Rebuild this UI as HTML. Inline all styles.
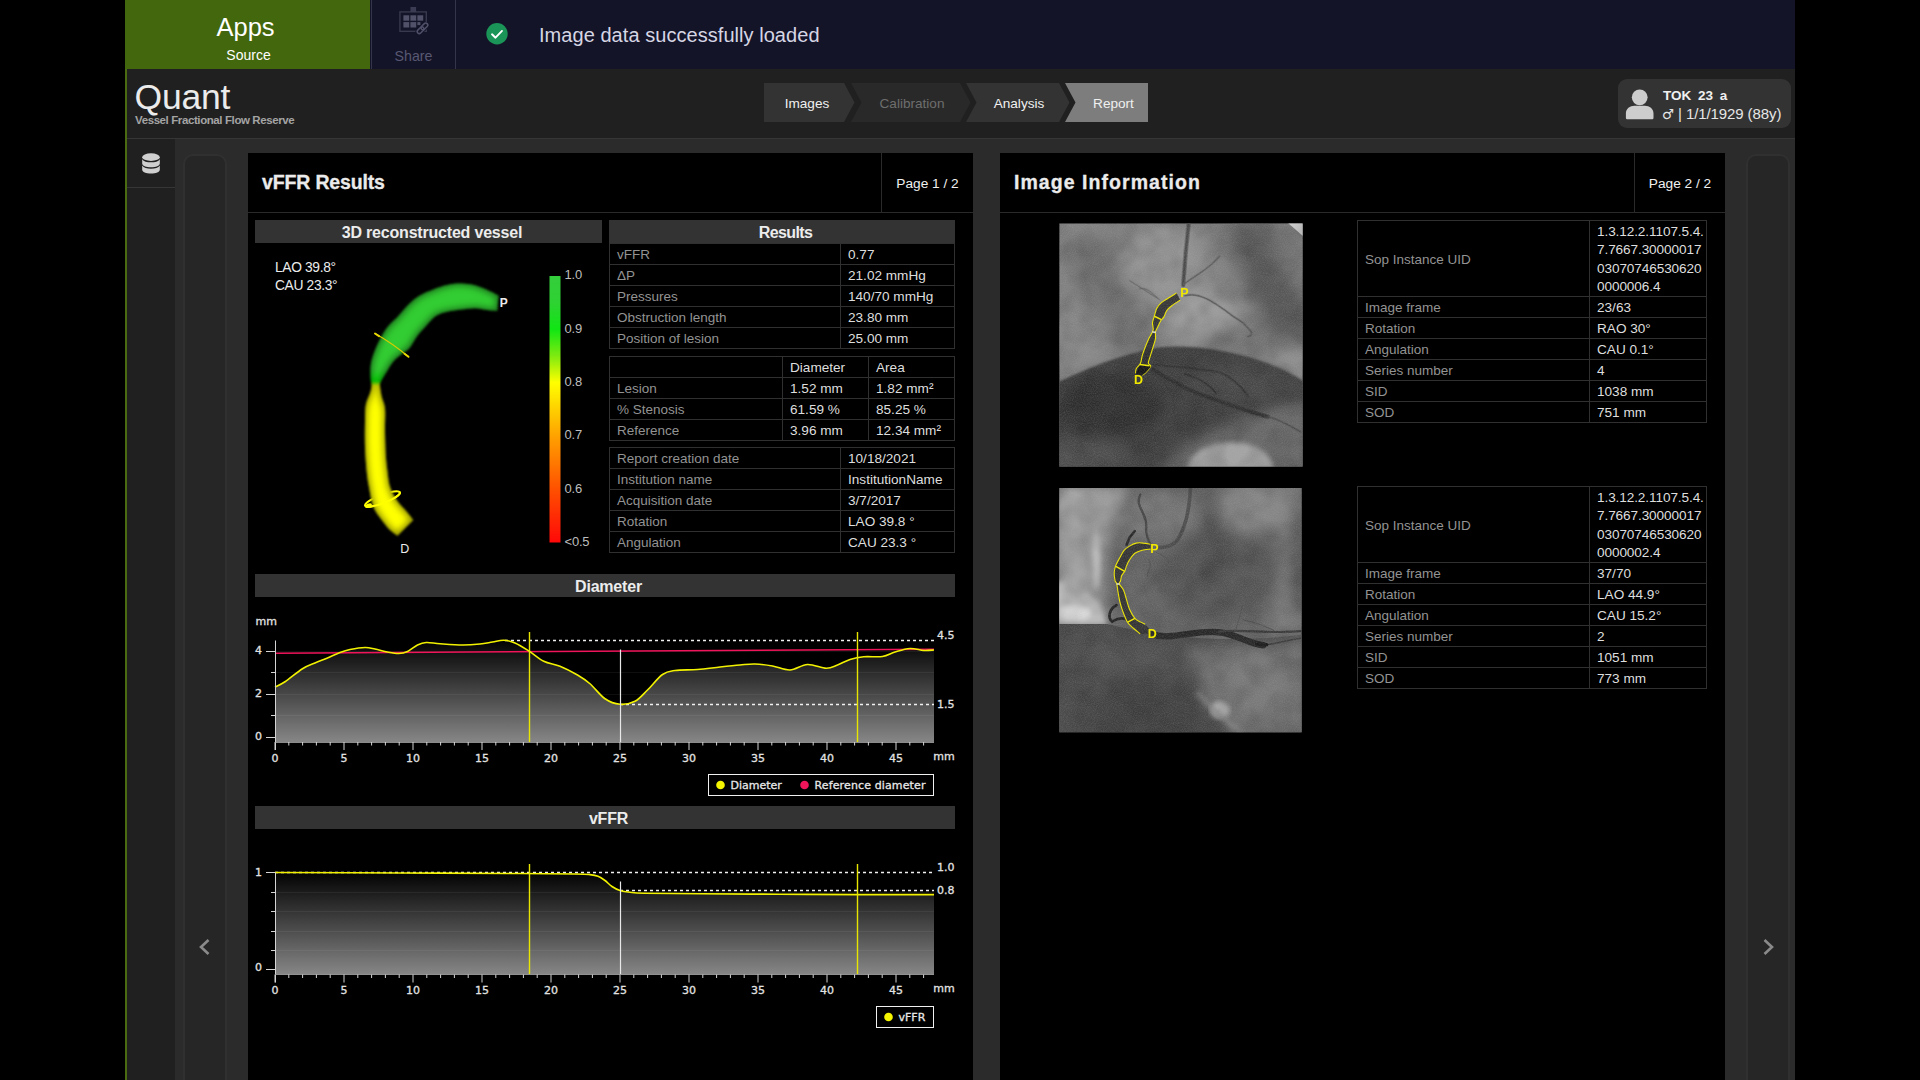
<!DOCTYPE html>
<html lang="en">
<head>
<meta charset="utf-8">
<title>Quant - Vessel Fractional Flow Reserve</title>
<style>
*{box-sizing:border-box;margin:0;padding:0}
html,body{width:1920px;height:1080px;overflow:hidden;background:#000}
body{font-family:"Liberation Sans",sans-serif;color:#f0f0f0;position:relative}
.abs{position:absolute}
#app{position:absolute;left:125px;top:0;width:1670px;height:1080px;background:#2b2b2b;overflow:hidden}
#greenline{position:absolute;left:0;top:69px;width:2px;height:1011px;background:#4a6b10}
#topbar{position:absolute;left:0;top:0;width:1670px;height:69px;background:#141428}
#apps{position:absolute;left:0;top:0;width:245px;height:69px;background:#43670c;text-align:center;color:#fff}
#apps .t1{position:absolute;left:0;width:241px;top:12px;font-size:25.5px;line-height:30px}
#apps .t2{position:absolute;left:0;width:247px;top:46px;font-size:14px;line-height:18px}
#share{position:absolute;left:246px;top:0;width:85px;height:69px;border-left:1px solid #34344a;border-right:1px solid #34344a;color:#5d5d74;text-align:center}
#share .lbl{position:absolute;left:0;width:83px;top:47px;font-size:14.2px;line-height:18px;color:#585872}
#status{position:absolute;left:414px;top:21.5px;font-size:20px;line-height:26px;color:#d6d6e4;white-space:nowrap;letter-spacing:0.05px}
#header{position:absolute;left:2px;top:69px;width:1668px;height:70px;background:#202020;border-bottom:1px solid #363636}
#quant{position:absolute;left:7.5px;top:8px;font-size:35.5px;line-height:40px;color:#ebebeb;letter-spacing:-0.2px}
#subq{position:absolute;left:8px;top:44px;font-size:11.5px;line-height:14px;color:#a4a4a4;font-weight:bold;white-space:nowrap;letter-spacing:-0.4px}
.crumb{position:absolute;top:14.5px;height:39px;font-size:13.6px;line-height:39px;text-align:center;color:#f0f0f0}
#patient{position:absolute;left:1491px;top:10px;width:173px;height:49px;border-radius:9px;background:#333}
#patient .n{position:absolute;left:45px;top:8.5px;font-size:13.5px;line-height:16px;font-weight:bold;color:#f0f0f0;white-space:nowrap;word-spacing:3px}
#patient .d{position:absolute;left:44px;top:25.5px;font-size:15px;line-height:18px;color:#e6e6e6;white-space:nowrap;letter-spacing:-0.1px}
#patient .ms{font-family:"DejaVu Sans","Liberation Sans",sans-serif;font-size:13.5px;line-height:10px;display:inline-block;vertical-align:0px;margin-right:0px}
#sidebar{position:absolute;left:2px;top:139px;width:48px;height:941px;background:#202020}
#sidebar .cell{position:absolute;left:0;top:0;width:48px;height:49px;border-bottom:1px solid #363636}
.navbtn{position:absolute;top:153.5px;width:44px;height:940px;background:#262626;border:2px solid #303030;border-radius:10px}
.panel{position:absolute;top:153px;height:927px;background:#000}
.ptitle{position:absolute;left:0;top:0;height:60px;border-bottom:1px solid #2a2a2a}
.ptitle h2{position:absolute;left:14px;top:15px;font-size:19.5px;line-height:28px;font-weight:bold;color:#ebebeb;white-space:nowrap;letter-spacing:-0.3px;-webkit-text-stroke:0.3px #ebebeb}
.ppage{position:absolute;top:0;height:59px;border-left:1px solid #2a2a2a;font-size:13.7px;line-height:61px;text-align:center;color:#f0f0f0}
.sechead{position:absolute;padding-left:7px;height:23px;background:#333;color:#ececec;font-size:16px;line-height:25px;font-weight:bold;text-align:center;letter-spacing:-0.2px}
table.t{position:absolute;border-collapse:separate;border-spacing:0;border-top:1px solid #303030;border-left:1px solid #303030;font-size:13.6px;color:#dedede;table-layout:fixed}
table.t td{border-right:1px solid #303030;border-bottom:1px solid #303030;height:21px;padding:2px 0 0 7px;line-height:18px;white-space:nowrap;overflow:hidden}
table.t td.k{color:#939393;font-size:13.5px}
table.t td.uid{line-height:18.3px;padding:2px 0 0 7px;vertical-align:top;height:76px;letter-spacing:-0.1px}
svg text{font-family:"DejaVu Sans","Liberation Sans",sans-serif}
</style>
</head>
<body>
<div id="app">
<div id="topbar">
  <div id="apps"><div class="t1">Apps</div><div class="t2">Source</div></div>
  <div id="share">
    <svg class="abs" style="left:24px;top:4px" width="36" height="34" viewBox="0 0 36 34">
      <rect x="3.900" y="7.900" width="26.400" height="19.400" fill="none" stroke="#38384e" stroke-width="1.400"/>
      <rect x="14.500" y="3" width="5.600" height="5" fill="#3c3c54"/>
      <g fill="#51516a"><rect x="7.400" y="11.300" width="5.800" height="5.400"/><rect x="14.400" y="11.300" width="5.800" height="5.400"/><rect x="21.400" y="11.300" width="5.800" height="5.400"/><rect x="7.400" y="18.100" width="5.800" height="5.400"/><rect x="14.400" y="18.100" width="5.800" height="5.400"/><rect x="21.400" y="18.100" width="3" height="3"/></g>
      <g fill="none" stroke-linecap="round"><path d="M23 28L29.500 21.500" stroke="#141428" stroke-width="7"/><g stroke="#50506a" stroke-width="1.500"><rect x="-2" y="-3.900" width="4" height="7.800" rx="2" transform="translate(28.400 22.400) rotate(45)"/><rect x="-2" y="-3.900" width="4" height="7.800" rx="2" transform="translate(24.600 26.200) rotate(45)"/></g></g>
    </svg>
    <div class="lbl">Share</div>
  </div>
  <svg class="abs" style="left:361px;top:23px" width="22" height="22" viewBox="0 0 22 22"><circle cx="11" cy="10.800" r="10.700" fill="#1a9457"/><path d="M6 11.300l3.500 3.400 6.500-6.800" fill="none" stroke="#fff" stroke-width="1.900" stroke-linecap="round" stroke-linejoin="round"/></svg>
  <div id="status">Image data successfully loaded</div>
</div>
<div id="greenline"></div>
<div id="header">
  <div id="quant">Quant</div>
  <div id="subq">Vessel Fractional Flow Reserve</div>
  <svg class="abs" style="left:637px;top:14px" width="386" height="39" viewBox="0 0 386 39">
    <polygon points="0,0 80,0 90.5,19.5 80,39 0,39" fill="#333"/>
    <polygon points="87,0 196,0 206.5,19.5 196,39 87,39 97.5,19.5" fill="#292929"/>
    <polygon points="202,0 295,0 305.5,19.5 295,39 202,39 212.5,19.5" fill="#333"/>
    <polygon points="301,0 384,0 384,39 301,39 311.5,19.5" fill="#7d7d7d"/>
  </svg>
  <div class="crumb" style="left:637px;width:86px">Images</div>
  <div class="crumb" style="left:736px;width:98px;color:#6e6e6e">Calibration</div>
  <div class="crumb" style="left:847px;width:90px">Analysis</div>
  <div class="crumb" style="left:946px;width:81px">Report</div>
  <div id="patient">
    <svg class="abs" style="left:7px;top:10px" width="30" height="31" viewBox="0 0 30 31"><circle cx="14.7" cy="8.3" r="7.9" fill="#cdcdcd"/><path d="M2.5 30.300c-1 0-1.600-.6-1.600-1.600v-4.200c0-5 4-7.800 8.600-7.800h10.400c4.600 0 8.600 2.800 8.600 7.800v4.200c0 1-.6 1.600-1.600 1.600z" fill="#cdcdcd"/></svg>
    <div class="n">TOK 23 a</div>
    <div class="d"><span class="ms">&#9794;</span> | 1/1/1929 (88y)</div>
  </div>
</div>
<div id="sidebar"><div class="cell">
  <svg class="abs" style="left:13.500px;top:14px" width="20" height="21" viewBox="0 0 22 23">
    <g fill="#cfcfcf"><ellipse cx="11" cy="4.500" rx="9.700" ry="4.200"/><path d="M1.300 6.800c1.500 2.500 5.300 3.400 9.700 3.400s8.200-.9 9.700-3.400v4.600c0 2.300-4.300 4.200-9.700 4.200s-9.700-1.900-9.700-4.200z"/><path d="M1.300 13.800c1.500 2.500 5.300 3.400 9.700 3.400s8.200-.9 9.700-3.400v4.600c0 2.300-4.300 4.200-9.700 4.200s-9.700-1.900-9.700-4.200z"/></g>
  </svg>
</div></div>
<div class="navbtn" style="left:58px"><svg class="abs" style="left:13px;top:782.5px" width="13" height="18" viewBox="0 0 13 18"><path d="M10.500 2L3 9l7.500 7" fill="none" stroke="#8a8a8a" stroke-width="2.600"/></svg></div>
<div class="navbtn" style="left:1621px"><svg class="abs" style="left:14px;top:782.5px" width="13" height="18" viewBox="0 0 13 18"><path d="M2.500 2L10 9l-7.500 7" fill="none" stroke="#8a8a8a" stroke-width="2.600"/></svg></div>
<div class="panel" id="pl" style="left:123px;width:725px">
  <div class="ptitle" style="width:725px"><h2 style="letter-spacing:-0.15px">vFFR Results</h2><div class="ppage" style="left:633px;width:92px">Page 1 / 2</div></div>
  <div class="sechead" style="left:7px;top:67px;width:347px">3D reconstructed vessel</div>
  <div class="sechead" style="left:361px;top:67px;width:346px;letter-spacing:-0.6px">Results</div>
  <table class="t" style="left:361px;top:90px;width:346px">
    <colgroup><col style="width:231px"><col style="width:114px"></colgroup>
    <tr><td class="k">vFFR</td><td>0.77</td></tr>
    <tr><td class="k">&Delta;P</td><td>21.02 mmHg</td></tr>
    <tr><td class="k">Pressures</td><td>140/70 mmHg</td></tr>
    <tr><td class="k">Obstruction length</td><td>23.80 mm</td></tr>
    <tr><td class="k">Position of lesion</td><td>25.00 mm</td></tr>
  </table>
  <table class="t" style="left:361px;top:203px;width:346px">
    <colgroup><col style="width:173px"><col style="width:86px"><col style="width:86px"></colgroup>
    <tr><td class="k"></td><td>Diameter</td><td>Area</td></tr>
    <tr><td class="k">Lesion</td><td>1.52 mm</td><td>1.82 mm&sup2;</td></tr>
    <tr><td class="k">% Stenosis</td><td>61.59 %</td><td>85.25 %</td></tr>
    <tr><td class="k">Reference</td><td>3.96 mm</td><td>12.34 mm&sup2;</td></tr>
  </table>
  <table class="t" style="left:361px;top:294px;width:346px">
    <colgroup><col style="width:231px"><col style="width:114px"></colgroup>
    <tr><td class="k">Report creation date</td><td>10/18/2021</td></tr>
    <tr><td class="k">Institution name</td><td>InstitutionName</td></tr>
    <tr><td class="k">Acquisition date</td><td>3/7/2017</td></tr>
    <tr><td class="k">Rotation</td><td>LAO 39.8 &deg;</td></tr>
    <tr><td class="k">Angulation</td><td>CAU 23.3 &deg;</td></tr>
  </table>
  <div class="sechead" style="left:7px;top:421px;width:700px">Diameter</div>
  <div class="sechead" style="left:7px;top:653px;width:700px">vFFR</div>
  <svg class="abs" style="left:0;top:90px" width="361" height="330" viewBox="248 243 361 330">
<defs>
<linearGradient id="vg" gradientUnits="userSpaceOnUse" x1="0" y1="370" x2="0" y2="392"><stop offset="0" stop-color="#32cd32"/><stop offset="0.5" stop-color="#08e408"/><stop offset="0.72" stop-color="#f4fa00"/><stop offset="1" stop-color="#ffff00"/></linearGradient>
<linearGradient id="cb" x1="0" y1="0" x2="0" y2="1"><stop offset="0" stop-color="#34cd3c"/><stop offset="0.1" stop-color="#2ed232"/><stop offset="0.2" stop-color="#10e614"/><stop offset="0.3" stop-color="#7eea10"/><stop offset="0.4" stop-color="#ffff00"/><stop offset="0.5" stop-color="#ffd000"/><stop offset="0.6" stop-color="#ffa200"/><stop offset="0.8" stop-color="#ff5000"/><stop offset="1" stop-color="#ff0808"/></linearGradient>
<filter id="shade" x="-10%" y="-10%" width="120%" height="120%" color-interpolation-filters="sRGB">
<feMorphology in="SourceAlpha" operator="erode" radius="2" result="e"/>
<feGaussianBlur in="e" stdDeviation="3.2" result="b"/>
<feComposite in="SourceGraphic" in2="b" operator="in" result="lit"/>
<feFlood flood-color="#000" flood-opacity="0.42"/><feComposite in2="SourceAlpha" operator="in" result="dk"/>
<feMerge result="m"><feMergeNode in="SourceGraphic"/><feMergeNode in="dk"/><feMergeNode in="lit"/></feMerge>
<feGaussianBlur in="m" stdDeviation="0.9"/>
</filter></defs>
<g transform="translate(382.5 499) rotate(-21)"><ellipse cx="0" cy="0" rx="18.600" ry="4.200" fill="none" stroke="#ffff00" stroke-width="2"/></g>
<path d="M498.6 295.7 C497.0 294.9 492.8 292.5 488.9 290.8 C485.0 289.1 479.6 286.5 475.0 285.3 C470.4 284.1 465.7 283.7 461.1 283.6 C456.5 283.6 451.8 284.0 447.2 285.0 C442.6 286.0 437.9 287.6 433.3 289.4 C428.7 291.2 423.6 293.1 419.4 295.7 C415.2 298.2 412.0 301.1 408.3 304.7 C404.6 308.3 400.7 313.5 397.2 317.2 C393.7 320.9 390.4 323.2 387.5 326.9 C384.6 330.6 382.1 335.2 379.9 339.4 C377.7 343.6 375.8 347.7 374.3 351.9 C372.8 356.1 371.4 360.0 370.8 364.4 C370.2 368.8 370.5 374.7 370.6 378.3 C370.7 381.9 371.7 383.3 371.6 385.8 C371.5 388.3 371.0 390.1 370.0 393.3 C369.0 396.5 366.6 400.3 365.8 405.0 C365.0 409.7 365.1 414.8 365.0 421.7 C364.9 428.6 364.7 438.4 365.0 446.7 C365.3 455.0 366.0 464.8 366.7 471.7 C367.4 478.6 368.1 482.5 369.2 488.3 C370.3 494.1 371.2 501.4 373.3 506.7 C375.4 512.0 378.9 516.1 381.7 520.0 C384.5 523.9 387.4 527.4 390.0 530.0 C392.6 532.6 396.2 534.8 397.5 535.8 L413.3 520.0 C412.2 518.6 409.5 515.0 406.7 511.7 C403.9 508.4 399.5 504.2 396.7 500.0 C393.9 495.8 391.5 491.4 390.0 486.7 C388.5 482.0 388.2 477.0 387.5 471.7 C386.8 466.4 386.2 461.9 385.8 455.0 C385.4 448.1 385.1 437.8 385.0 430.0 C384.9 422.2 385.6 413.9 385.0 408.3 C384.4 402.8 382.5 400.4 381.7 396.7 C380.9 392.9 380.1 388.4 380.0 385.8 C379.9 383.2 380.2 383.3 381.2 381.1 C382.3 378.9 384.1 376.0 386.1 372.8 C388.1 369.6 390.3 364.9 393.1 361.7 C395.9 358.4 400.0 355.6 402.8 353.3 C405.6 351.0 407.4 350.6 409.7 347.8 C412.0 345.0 413.9 340.4 416.7 336.7 C419.5 333.0 423.2 329.1 426.4 325.6 C429.6 322.1 432.6 318.1 436.1 315.8 C439.6 313.5 443.0 312.7 447.2 311.7 C451.4 310.7 456.5 310.2 461.1 309.6 C465.7 309.0 470.4 308.1 475.0 308.2 C479.6 308.3 485.2 309.8 488.9 310.3 C492.6 310.8 495.8 310.9 497.2 311.0 Z" fill="url(#vg)" filter="url(#shade)"/>
<path d="M375 333.500Q392 343 408.500 356.800" fill="none" stroke="#d8cc00" stroke-width="1.200"/><path d="M375 333.500l4 2.600M408.500 356.800l-4-3" stroke="#e8d800" stroke-width="2" stroke-linecap="round"/>
<g transform="translate(382.5 499) rotate(-21)"><path d="M-18.600 0A18.600 4.200 0 0 0 18.600 0" fill="none" stroke="#ffff00" stroke-width="2.100" stroke-linecap="round"/><ellipse cx="-15.500" cy="1.200" rx="3.600" ry="2" fill="#ffff00"/></g>
<g font-family="Liberation Sans, sans-serif" style="font-family:'Liberation Sans',sans-serif" fill="#ececec">
<text x="275" y="271.500" font-size="13.8" style="font-family:'Liberation Sans',sans-serif" letter-spacing="-0.35">LAO 39.8&#176;</text><text x="275" y="289.500" font-size="13.8" style="font-family:'Liberation Sans',sans-serif" letter-spacing="-0.35">CAU 23.3&#176;</text>
<text x="499.800" y="307" font-size="12" font-weight="bold" style="font-family:'Liberation Sans',sans-serif">P</text><text x="400.300" y="552.500" font-size="12.500" style="font-family:'Liberation Sans',sans-serif">D</text></g>
<rect x="549.500" y="276" width="11" height="266.500" fill="url(#cb)"/>
<g fill="#bdbdbd" font-size="13" letter-spacing="-0.2">
<text x="564.500" y="279.3" style="font-family:'Liberation Sans',sans-serif">1.0</text>
<text x="564.500" y="333.2" style="font-family:'Liberation Sans',sans-serif">0.9</text>
<text x="564.500" y="386.1" style="font-family:'Liberation Sans',sans-serif">0.8</text>
<text x="564.500" y="439.3" style="font-family:'Liberation Sans',sans-serif">0.7</text>
<text x="564.500" y="492.7" style="font-family:'Liberation Sans',sans-serif">0.6</text>
<text x="564.500" y="546.0" style="font-family:'Liberation Sans',sans-serif">&lt;0.5</text>
</g></svg>

  <svg class="abs" style="left:0;top:445px" width="725" height="208" viewBox="248 598 725 208">
<defs><linearGradient id="gd" gradientUnits="userSpaceOnUse" x1="0" y1="640.5" x2="0" y2="742.0"><stop offset="0" stop-color="#020202"/><stop offset="0.15" stop-color="#161616"/><stop offset="1" stop-color="#868686"/></linearGradient></defs>
<path d="M275.00 687.00 C276.67 686.12 280.42 684.79 285.00 681.75 C289.58 678.71 297.50 671.88 302.50 668.75 C307.50 665.62 310.83 664.79 315.00 663.00 C319.17 661.21 323.33 659.75 327.50 658.00 C331.67 656.25 336.25 653.92 340.00 652.50 C343.75 651.08 345.83 650.33 350.00 649.50 C354.17 648.67 360.83 647.58 365.00 647.50 C369.17 647.42 371.25 648.25 375.00 649.00 C378.75 649.75 383.54 651.25 387.50 652.00 C391.46 652.75 395.42 653.58 398.75 653.50 C402.08 653.42 404.38 652.92 407.50 651.50 C410.62 650.08 414.38 646.50 417.50 645.00 C420.62 643.50 422.50 642.71 426.25 642.50 C430.00 642.29 433.96 643.33 440.00 643.75 C446.04 644.17 455.83 644.96 462.50 645.00 C469.17 645.04 475.00 644.50 480.00 644.00 C485.00 643.50 488.54 642.63 492.50 642.00 C496.46 641.37 500.00 640.03 503.75 640.20 C507.50 640.37 510.75 641.16 515.00 643.00 C519.25 644.84 524.46 648.21 529.25 651.25 C534.04 654.29 538.62 658.75 543.75 661.25 C548.88 663.75 554.38 663.96 560.00 666.25 C565.62 668.54 572.50 672.08 577.50 675.00 C582.50 677.92 585.42 679.79 590.00 683.75 C594.58 687.71 600.00 695.33 605.00 698.75 C610.00 702.17 615.00 703.83 620.00 704.25 C625.00 704.67 630.42 703.62 635.00 701.25 C639.58 698.88 642.92 694.46 647.50 690.00 C652.08 685.54 657.92 677.75 662.50 674.50 C667.08 671.25 669.17 671.33 675.00 670.50 C680.83 669.67 690.00 670.08 697.50 669.50 C705.00 668.92 712.92 667.75 720.00 667.00 C727.08 666.25 734.17 665.50 740.00 665.00 C745.83 664.50 749.58 663.83 755.00 664.00 C760.42 664.17 766.67 665.00 772.50 666.00 C778.33 667.00 784.17 670.25 790.00 670.00 C795.83 669.75 801.46 664.79 807.50 664.50 C813.54 664.21 821.25 668.17 826.25 668.25 C831.25 668.33 833.54 666.46 837.50 665.00 C841.46 663.54 845.62 660.88 850.00 659.50 C854.38 658.12 858.33 657.25 863.75 656.75 C869.17 656.25 877.29 657.29 882.50 656.50 C887.71 655.71 890.42 653.33 895.00 652.00 C899.58 650.67 905.21 648.75 910.00 648.50 C914.79 648.25 919.75 650.25 923.75 650.50 C927.75 650.75 932.29 650.08 934.00 650.00 L934.0 742.0 L275.0 742.0 Z" fill="url(#gd)"/>
<path d="M275.0 715.5H934.0" stroke="#fff" stroke-opacity="0.06"/>
<path d="M275.0 694.5H934.0" stroke="#fff" stroke-opacity="0.06"/>
<path d="M275.0 672.5H934.0" stroke="#fff" stroke-opacity="0.06"/>
<path d="M275.0 651.5H934.0" stroke="#fff" stroke-opacity="0.06"/>
<path d="M505 640.5H934" stroke="#f0f0f0" stroke-width="1.3" stroke-dasharray="3 3"/>
<path d="M620 704.5H934" stroke="#f0f0f0" stroke-width="1.3" stroke-dasharray="3 3"/>
<path d="M275 653.2L934 649.2" stroke="#f0145a" stroke-width="1.5"/>
<path d="M275.00 687.00 C276.67 686.12 280.42 684.79 285.00 681.75 C289.58 678.71 297.50 671.88 302.50 668.75 C307.50 665.62 310.83 664.79 315.00 663.00 C319.17 661.21 323.33 659.75 327.50 658.00 C331.67 656.25 336.25 653.92 340.00 652.50 C343.75 651.08 345.83 650.33 350.00 649.50 C354.17 648.67 360.83 647.58 365.00 647.50 C369.17 647.42 371.25 648.25 375.00 649.00 C378.75 649.75 383.54 651.25 387.50 652.00 C391.46 652.75 395.42 653.58 398.75 653.50 C402.08 653.42 404.38 652.92 407.50 651.50 C410.62 650.08 414.38 646.50 417.50 645.00 C420.62 643.50 422.50 642.71 426.25 642.50 C430.00 642.29 433.96 643.33 440.00 643.75 C446.04 644.17 455.83 644.96 462.50 645.00 C469.17 645.04 475.00 644.50 480.00 644.00 C485.00 643.50 488.54 642.63 492.50 642.00 C496.46 641.37 500.00 640.03 503.75 640.20 C507.50 640.37 510.75 641.16 515.00 643.00 C519.25 644.84 524.46 648.21 529.25 651.25 C534.04 654.29 538.62 658.75 543.75 661.25 C548.88 663.75 554.38 663.96 560.00 666.25 C565.62 668.54 572.50 672.08 577.50 675.00 C582.50 677.92 585.42 679.79 590.00 683.75 C594.58 687.71 600.00 695.33 605.00 698.75 C610.00 702.17 615.00 703.83 620.00 704.25 C625.00 704.67 630.42 703.62 635.00 701.25 C639.58 698.88 642.92 694.46 647.50 690.00 C652.08 685.54 657.92 677.75 662.50 674.50 C667.08 671.25 669.17 671.33 675.00 670.50 C680.83 669.67 690.00 670.08 697.50 669.50 C705.00 668.92 712.92 667.75 720.00 667.00 C727.08 666.25 734.17 665.50 740.00 665.00 C745.83 664.50 749.58 663.83 755.00 664.00 C760.42 664.17 766.67 665.00 772.50 666.00 C778.33 667.00 784.17 670.25 790.00 670.00 C795.83 669.75 801.46 664.79 807.50 664.50 C813.54 664.21 821.25 668.17 826.25 668.25 C831.25 668.33 833.54 666.46 837.50 665.00 C841.46 663.54 845.62 660.88 850.00 659.50 C854.38 658.12 858.33 657.25 863.75 656.75 C869.17 656.25 877.29 657.29 882.50 656.50 C887.71 655.71 890.42 653.33 895.00 652.00 C899.58 650.67 905.21 648.75 910.00 648.50 C914.79 648.25 919.75 650.25 923.75 650.50 C927.75 650.75 932.29 650.08 934.00 650.00" fill="none" stroke="#f2f200" stroke-width="1.6" stroke-linejoin="round"/>
<path d="M529.5 632V742M857.5 632V742" stroke="#e6e600" stroke-width="1.4"/>
<path d="M620.5 649.5V742" stroke="#e8e8e8" stroke-width="1.2"/>
<path d="M275.5 640.5V750" stroke="#d4d4d4" stroke-width="1"/>
<path d="M275 742.5H934" stroke="#9a9a9a" stroke-width="1" stroke-opacity="0.9"/>
<path d="M266.0 737.5h9.0M271.0 715.5h4.0M266.0 694.5h9.0M271.0 672.5h4.0M266.0 651.5h9.0" stroke="#d4d4d4" stroke-width="1" fill="none"/>
<path d="M275.0 742.0v8.0M288.8 742.0v3.5M302.6 742.0v3.5M316.4 742.0v3.5M330.2 742.0v3.5M344.0 742.0v8.0M357.8 742.0v3.5M371.6 742.0v3.5M385.4 742.0v3.5M399.2 742.0v3.5M413.0 742.0v8.0M426.8 742.0v3.5M440.6 742.0v3.5M454.4 742.0v3.5M468.2 742.0v3.5M482.0 742.0v8.0M495.8 742.0v3.5M509.6 742.0v3.5M523.4 742.0v3.5M537.2 742.0v3.5M551.0 742.0v8.0M564.8 742.0v3.5M578.6 742.0v3.5M592.4 742.0v3.5M606.2 742.0v3.5M620.0 742.0v8.0M633.8 742.0v3.5M647.6 742.0v3.5M661.4 742.0v3.5M675.2 742.0v3.5M689.0 742.0v8.0M702.8 742.0v3.5M716.6 742.0v3.5M730.4 742.0v3.5M744.2 742.0v3.5M758.0 742.0v8.0M771.8 742.0v3.5M785.6 742.0v3.5M799.4 742.0v3.5M813.2 742.0v3.5M827.0 742.0v8.0M840.8 742.0v3.5M854.6 742.0v3.5M868.4 742.0v3.5M882.2 742.0v3.5M896.0 742.0v8.0M909.8 742.0v3.5M923.6 742.0v3.5" stroke="#d4d4d4" stroke-width="1" fill="none"/>
<g font-size="11" fill="#e2e2e2" stroke="#e2e2e2" stroke-width="0.3"><text x="255.5" y="625">mm</text>
<text x="262" y="740.3" text-anchor="end">0</text>
<text x="262" y="697.2" text-anchor="end">2</text>
<text x="262" y="654.1" text-anchor="end">4</text>
<text x="937" y="638.5">4.5</text><text x="937" y="708">1.5</text></g>
<g font-size="11" fill="#e2e2e2" stroke="#e2e2e2" stroke-width="0.3" text-anchor="middle"><text x="275.0" y="762.0">0</text><text x="344.0" y="762.0">5</text><text x="413.0" y="762.0">10</text><text x="482.0" y="762.0">15</text><text x="551.0" y="762.0">20</text><text x="620.0" y="762.0">25</text><text x="689.0" y="762.0">30</text><text x="758.0" y="762.0">35</text><text x="827.0" y="762.0">40</text><text x="896.0" y="762.0">45</text><text x="944" y="760.0">mm</text></g>
<rect x="708.500" y="774.500" width="225" height="21" fill="#000" stroke="#f0f0f0" stroke-width="1"/>
<circle cx="720.500" cy="785" r="4.300" fill="#f5f500"/><circle cx="804.500" cy="785" r="4.300" fill="#f0145a"/>
<g font-size="11" fill="#e8e8e8" stroke="#e8e8e8" stroke-width="0.3"><text x="730.5" y="789">Diameter</text><text x="814.5" y="789" textLength="111">Reference diameter</text></g>
</svg>
<svg class="abs" style="left:0;top:677px" width="725" height="250" viewBox="248 830 725 250">
<defs><linearGradient id="gv" gradientUnits="userSpaceOnUse" x1="0" y1="872.5" x2="0" y2="974.5"><stop offset="0" stop-color="#020202"/><stop offset="0.15" stop-color="#161616"/><stop offset="1" stop-color="#868686"/></linearGradient></defs>
<path d="M275.00 872.50 C295.83 872.58 359.17 872.83 400.00 873.00 C440.83 873.17 490.83 873.33 520.00 873.50 C549.17 873.67 563.33 873.82 575.00 874.00 C586.67 874.18 586.17 874.23 590.00 874.60 C593.83 874.97 595.50 875.22 598.00 876.20 C600.50 877.18 602.67 878.78 605.00 880.50 C607.33 882.22 609.50 884.83 612.00 886.50 C614.50 888.17 617.00 889.53 620.00 890.50 C623.00 891.47 625.83 891.85 630.00 892.30 C634.17 892.75 633.33 892.95 645.00 893.20 C656.67 893.45 677.50 893.63 700.00 893.80 C722.50 893.97 753.33 894.07 780.00 894.20 C806.67 894.33 834.33 894.53 860.00 894.60 C885.67 894.67 921.67 894.60 934.00 894.60 L934.0 974.5 L275.0 974.5 Z" fill="url(#gv)"/>
<path d="M275.0 950.5H934.0" stroke="#fff" stroke-opacity="0.06"/>
<path d="M275.0 931.5H934.0" stroke="#fff" stroke-opacity="0.06"/>
<path d="M275.0 911.5H934.0" stroke="#fff" stroke-opacity="0.06"/>
<path d="M275.0 892.5H934.0" stroke="#fff" stroke-opacity="0.06"/>
<path d="M275 872.5H934" stroke="#f0f0f0" stroke-width="1.3" stroke-dasharray="3 3"/>
<path d="M620 890.5H934" stroke="#f0f0f0" stroke-width="1.3" stroke-dasharray="3 3"/>
<path d="M275.00 872.50 C295.83 872.58 359.17 872.83 400.00 873.00 C440.83 873.17 490.83 873.33 520.00 873.50 C549.17 873.67 563.33 873.82 575.00 874.00 C586.67 874.18 586.17 874.23 590.00 874.60 C593.83 874.97 595.50 875.22 598.00 876.20 C600.50 877.18 602.67 878.78 605.00 880.50 C607.33 882.22 609.50 884.83 612.00 886.50 C614.50 888.17 617.00 889.53 620.00 890.50 C623.00 891.47 625.83 891.85 630.00 892.30 C634.17 892.75 633.33 892.95 645.00 893.20 C656.67 893.45 677.50 893.63 700.00 893.80 C722.50 893.97 753.33 894.07 780.00 894.20 C806.67 894.33 834.33 894.53 860.00 894.60 C885.67 894.67 921.67 894.60 934.00 894.60" fill="none" stroke="#f2f200" stroke-width="1.6" stroke-linejoin="round"/>
<path d="M529.5 864V974M857.5 864V974" stroke="#e6e600" stroke-width="1.4"/>
<path d="M620.5 881.5V974" stroke="#e8e8e8" stroke-width="1.2"/>
<path d="M275.5 872.5V982.5" stroke="#d4d4d4" stroke-width="1"/>
<path d="M275 974.5H934" stroke="#9a9a9a" stroke-width="1" stroke-opacity="0.9"/>
<path d="M266.0 969.5h9.0M271.0 950.5h4.0M271.0 931.5h4.0M271.0 911.5h4.0M271.0 892.5h4.0M266.0 872.5h9.0" stroke="#d4d4d4" stroke-width="1" fill="none"/>
<path d="M275.0 974.5v8.0M288.8 974.5v3.5M302.6 974.5v3.5M316.4 974.5v3.5M330.2 974.5v3.5M344.0 974.5v8.0M357.8 974.5v3.5M371.6 974.5v3.5M385.4 974.5v3.5M399.2 974.5v3.5M413.0 974.5v8.0M426.8 974.5v3.5M440.6 974.5v3.5M454.4 974.5v3.5M468.2 974.5v3.5M482.0 974.5v8.0M495.8 974.5v3.5M509.6 974.5v3.5M523.4 974.5v3.5M537.2 974.5v3.5M551.0 974.5v8.0M564.8 974.5v3.5M578.6 974.5v3.5M592.4 974.5v3.5M606.2 974.5v3.5M620.0 974.5v8.0M633.8 974.5v3.5M647.6 974.5v3.5M661.4 974.5v3.5M675.2 974.5v3.5M689.0 974.5v8.0M702.8 974.5v3.5M716.6 974.5v3.5M730.4 974.5v3.5M744.2 974.5v3.5M758.0 974.5v8.0M771.8 974.5v3.5M785.6 974.5v3.5M799.4 974.5v3.5M813.2 974.5v3.5M827.0 974.5v8.0M840.8 974.5v3.5M854.6 974.5v3.5M868.4 974.5v3.5M882.2 974.5v3.5M896.0 974.5v8.0M909.8 974.5v3.5M923.6 974.5v3.5" stroke="#d4d4d4" stroke-width="1" fill="none"/>
<g font-size="11" fill="#e2e2e2" stroke="#e2e2e2" stroke-width="0.3"><text x="262" y="876" text-anchor="end">1</text><text x="262" y="970.5" text-anchor="end">0</text>
<text x="937" y="871">1.0</text><text x="937" y="894">0.8</text></g>
<g font-size="11" fill="#e2e2e2" stroke="#e2e2e2" stroke-width="0.3" text-anchor="middle"><text x="275.0" y="994.3">0</text><text x="344.0" y="994.3">5</text><text x="413.0" y="994.3">10</text><text x="482.0" y="994.3">15</text><text x="551.0" y="994.3">20</text><text x="620.0" y="994.3">25</text><text x="689.0" y="994.3">30</text><text x="758.0" y="994.3">35</text><text x="827.0" y="994.3">40</text><text x="896.0" y="994.3">45</text><text x="944" y="992.3">mm</text></g>
<rect x="876.500" y="1006.500" width="57" height="21" fill="#000" stroke="#f0f0f0" stroke-width="1"/>
<circle cx="888.500" cy="1017" r="4.300" fill="#f5f500"/>
<g font-size="11" fill="#e8e8e8" stroke="#e8e8e8" stroke-width="0.3"><text x="898.5" y="1021">vFFR</text></g>
</svg>

</div>
<div class="panel" id="pr" style="left:875px;width:725px">
  <div class="ptitle" style="width:725px"><h2 style="letter-spacing:1.05px">Image Information</h2><div class="ppage" style="left:634px;width:91px">Page 2 / 2</div></div>
  <svg class="abs" style="left:59px;top:70px" width="244" height="244" viewBox="1059 223 244 244">
<defs>
<filter id="b30" x="-30%" y="-30%" width="160%" height="160%"><feGaussianBlur stdDeviation="42"/></filter>
<filter id="b20" x="-30%" y="-30%" width="160%" height="160%"><feGaussianBlur stdDeviation="28"/></filter>
<filter id="b8" x="-10%" y="-10%" width="120%" height="120%"><feGaussianBlur stdDeviation="12"/></filter>
<filter id="b5" x="-10%" y="-10%" width="120%" height="120%"><feGaussianBlur stdDeviation="5"/></filter>
<filter id="b3" x="-10%" y="-10%" width="120%" height="120%"><feGaussianBlur stdDeviation="2.5"/></filter>
<filter id="b1" x="-5%" y="-5%" width="110%" height="110%"><feGaussianBlur stdDeviation="2.6"/></filter><filter id="b1a" x="-5%" y="-5%" width="110%" height="110%"><feGaussianBlur stdDeviation="0.5"/></filter>
<filter id="nz" x="0" y="0" width="100%" height="100%"><feTurbulence type="fractalNoise" baseFrequency="0.9" numOctaves="2" seed="7" result="t"/><feColorMatrix in="t" type="matrix" values="0 0 0 0 0.5  0 0 0 0 0.5  0 0 0 0 0.5  1.4 0 0 0 -0.45"/></filter>
<filter id="nz2" x="0" y="0" width="100%" height="100%"><feTurbulence type="fractalNoise" baseFrequency="0.9" numOctaves="2" seed="3" result="t"/><feColorMatrix in="t" type="matrix" values="0 0 0 0 0.95  0 0 0 0 0.95  0 0 0 0 0.95  1.4 0 0 0 -0.5"/></filter>
<filter id="blot" x="0" y="0" width="100%" height="100%"><feTurbulence type="fractalNoise" baseFrequency="0.011" numOctaves="2" seed="11" result="t"/><feColorMatrix in="t" type="matrix" values="0 0 0 0 0  0 0 0 0 0  0 0 0 0 0  2.0 0 0 0 -0.7"/></filter>
<clipPath id="c1"><rect x="1059.400" y="223.400" width="243.200" height="243.200"/></clipPath>
<clipPath id="c2"><rect x="1059.300" y="488" width="242.300" height="244.200"/></clipPath>
</defs>
<g clip-path="url(#c1)">
<g transform="translate(1050 215) scale(0.240741)">
<rect x="30" y="30" width="1030" height="1030" fill="#838383"/>
<g filter="url(#b30)">
<polygon points="40,140 260,80 470,540 300,640" fill="#707070"/>
<ellipse cx="130" cy="520" rx="110" ry="110" fill="#8a8a8a"/>
<ellipse cx="470" cy="210" rx="170" ry="170" fill="#949494"/>
<ellipse cx="640" cy="440" rx="140" ry="110" fill="#a0a0a0"/>
<polygon points="720,10 900,10 1080,400 1080,580 900,480 790,240" fill="#585858"/>
<ellipse cx="1000" cy="150" rx="70" ry="130" fill="#727272"/>
<ellipse cx="790" cy="530" rx="190" ry="70" fill="#727272"/>
<ellipse cx="1010" cy="610" rx="80" ry="60" fill="#969696"/>
</g>
<path d="M20 700C150 640 300 575 450 550C560 538 700 556 820 588C920 618 1000 655 1070 700V1070H20Z" fill="#404040" filter="url(#b5)"/>
<g filter="url(#b20)">
<polygon points="1090,760 900,800 740,870 560,960 430,1090 1090,1090" fill="#686868"/>
<ellipse cx="250" cy="790" rx="220" ry="130" fill="#323232"/>
<ellipse cx="150" cy="1010" rx="180" ry="70" fill="#505050"/>
<ellipse cx="800" cy="700" rx="220" ry="70" fill="#494949"/>
</g>
<path d="M570 1060C580 980 660 945 760 945C860 945 920 990 930 1060Z" fill="#a4a4a4" filter="url(#b8)"/>
<polygon points="985,30 1060,30 1060,95" fill="#cfcfcf" filter="url(#b3)"/>
<g fill="none" stroke-linecap="round" filter="url(#b1)">
<path d="M577 25L564 150L553 292" stroke="#4e4e4e" stroke-width="15"/>
<path d="M553 290C600 250 650 235 705 170" stroke="#5a5a5a" stroke-width="5"/>
<path d="M560 335C620 318 680 360 760 420C790 440 808 448 815 462C835 480 850 498 822 505" stroke="#555" stroke-width="6"/>
<path d="M330 272L445 345M372 306C400 298 420 320 455 352" stroke="#606060" stroke-width="4"/>
<path d="M425 640C500 690 600 742 700 772C780 800 850 825 905 838" stroke="#303030" stroke-width="16" opacity="0.85"/>
<path d="M430 622C520 630 640 640 700 652C760 672 800 720 822 752M560 660C620 680 660 700 690 740" stroke="#303030" stroke-width="6"/>
<path d="M905 838C960 850 1000 880 1040 900" stroke="#484848" stroke-width="6"/>
</g>
<rect x="30" y="30" width="1030" height="1030" fill="#000" opacity="0.13" filter="url(#blot)"/>
</g>
<path d="M1176.6 292.9 C1175.2 293.8 1170.7 296.6 1168.1 298.3 C1165.5 300.0 1162.8 301.4 1160.9 303.1 C1159.0 304.8 1157.8 306.3 1156.7 308.5 C1155.6 310.7 1155.0 313.9 1154.3 316.3 C1153.6 318.7 1152.7 320.6 1152.5 322.9 C1152.3 325.3 1153.7 327.6 1153.1 330.2 C1152.5 332.8 1150.2 335.8 1148.9 338.6 C1147.6 341.4 1146.4 344.2 1145.3 347.0 C1144.2 349.8 1143.1 352.7 1142.3 355.4 C1141.5 358.1 1141.5 361.1 1140.5 363.3 C1139.5 365.5 1137.0 367.0 1136.2 368.7 C1135.4 370.4 1135.7 372.7 1135.6 373.5 L1142.3 375.3 C1142.9 374.8 1144.5 373.8 1145.9 372.3 C1147.3 370.8 1150.3 367.8 1150.7 366.3 C1151.1 364.8 1148.4 364.9 1148.3 363.3 C1148.2 361.7 1149.3 359.4 1150.1 356.6 C1150.9 353.9 1152.2 350.0 1153.1 347.0 C1154.0 344.0 1155.1 341.1 1155.5 338.6 C1155.9 336.1 1155.1 334.0 1155.5 332.0 C1155.9 330.0 1157.0 328.5 1157.9 326.6 C1158.8 324.7 1159.9 322.1 1160.9 320.5 C1161.9 318.9 1162.9 318.6 1163.9 316.9 C1164.9 315.2 1165.4 312.3 1166.9 310.3 C1168.4 308.3 1170.7 306.6 1172.9 304.9 C1175.2 303.2 1179.0 300.9 1180.2 300.1Z" fill="#2e2e2e" filter="url(#b1a)" opacity="0.9"/>
<path d="M1176.6 292.9 C1175.2 293.8 1170.7 296.6 1168.1 298.3 C1165.5 300.0 1162.8 301.4 1160.9 303.1 C1159.0 304.8 1157.8 306.3 1156.7 308.5 C1155.6 310.7 1155.0 313.9 1154.3 316.3 C1153.6 318.7 1152.7 320.6 1152.5 322.9 C1152.3 325.3 1153.7 327.6 1153.1 330.2 C1152.5 332.8 1150.2 335.8 1148.9 338.6 C1147.6 341.4 1146.4 344.2 1145.3 347.0 C1144.2 349.8 1143.1 352.7 1142.3 355.4 C1141.5 358.1 1141.5 361.1 1140.5 363.3 C1139.5 365.5 1137.0 367.0 1136.2 368.7 C1135.4 370.4 1135.7 372.7 1135.6 373.5" fill="none" stroke="#ece400" stroke-width="1.1"/><path d="M1180.2 300.1 C1179.0 300.9 1175.2 303.2 1172.9 304.9 C1170.7 306.6 1168.4 308.3 1166.9 310.3 C1165.4 312.3 1164.9 315.2 1163.9 316.9 C1162.9 318.6 1161.9 318.9 1160.9 320.5 C1159.9 322.1 1158.8 324.7 1157.9 326.6 C1157.0 328.5 1155.9 330.0 1155.5 332.0 C1155.1 334.0 1155.9 336.1 1155.5 338.6 C1155.1 341.1 1154.0 344.0 1153.1 347.0 C1152.2 350.0 1150.9 353.9 1150.1 356.6 C1149.3 359.4 1148.2 361.7 1148.3 363.3 C1148.4 364.9 1151.1 364.8 1150.7 366.3 C1150.3 367.8 1147.3 370.8 1145.9 372.3 C1144.5 373.8 1142.9 374.8 1142.3 375.3" fill="none" stroke="#ece400" stroke-width="1.1"/>
<path d="M1140.2 365.1L1149.5 365.9L1150.7 366.9L1145.9 372.3L1142.3 375.3L1135.6 373.7Z" fill="#141414" filter="url(#b1a)"/>
<path d="M1154.3 316.3L1161.5 319.6M1139.9 364.5L1149.5 365.7" stroke="#f2ea00" stroke-width="1.500"/>
<path d="M1152.3 332.0L1155.7 332.2" stroke="#e8e8e8" stroke-width="1.500"/>
<rect x="1059" y="223" width="244" height="244" filter="url(#nz)" opacity="0.22"/>
<g fill="#f0e800" font-size="12.500" font-weight="bold"><text x="1180.300" y="297" style="font-family:'Liberation Sans',sans-serif">P</text><text x="1134" y="383.800" style="font-family:'Liberation Sans',sans-serif">D</text></g>
</g></svg>
<svg class="abs" style="left:59px;top:335px" width="244" height="245" viewBox="1059 488 244 245">
<g clip-path="url(#c2)">
<g transform="translate(1050 480) scale(0.240741)">
<rect x="30" y="25" width="1030" height="1035" fill="#666"/>
<g filter="url(#b20)">
<polygon points="20,20 335,20 255,200 215,420 232,600 20,600" fill="#9c9c9c"/>
<ellipse cx="450" cy="150" rx="150" ry="110" fill="#787878"/>
<ellipse cx="700" cy="400" rx="260" ry="190" fill="#585858"/>
<ellipse cx="700" cy="190" rx="60" ry="120" fill="#4f4f4f"/>
<ellipse cx="670" cy="370" rx="55" ry="60" fill="#4a4a4a"/>
<polygon points="890,20 1070,20 1070,620 905,620 965,300" fill="#7e7e7e"/>
<ellipse cx="850" cy="115" rx="165" ry="100" fill="#868686"/>
<ellipse cx="1030" cy="330" rx="35" ry="260" fill="#565656"/>
</g>
<g filter="url(#b8)">
<polygon points="20,420 120,430 205,510 236,600 20,600" fill="#bcbcbc"/>
<ellipse cx="100" cy="552" rx="70" ry="34" fill="#dcdcdc"/>
<ellipse cx="192" cy="330" rx="16" ry="120" fill="#bcbcbc"/>
<ellipse cx="95" cy="120" rx="55" ry="75" fill="#a6a6a6"/>
<ellipse cx="110" cy="400" rx="50" ry="90" fill="#a4a4a4"/>
</g>
<path d="M20 598L240 598C400 640 700 690 1070 640V1080H20Z" fill="#4c4c4c" filter="url(#b3)"/>
<g filter="url(#b20)">
<polygon points="570,700 1080,660 1080,1080 770,1080 630,900" fill="#707070"/>
<ellipse cx="860" cy="850" rx="130" ry="120" fill="#7a7a7a"/>
<ellipse cx="400" cy="965" rx="230" ry="120" fill="#424242"/>
<ellipse cx="300" cy="720" rx="250" ry="70" fill="#525252"/>
</g>
<ellipse cx="705" cy="955" rx="40" ry="36" fill="#b0b0b0" filter="url(#b8)"/>
<path d="M610 880C680 960 740 1010 800 1050" stroke="#888" stroke-width="14" fill="none" filter="url(#b8)"/>
<g fill="none" stroke-linecap="round" filter="url(#b1)">
<path d="M583 35C580 120 560 200 530 250C510 275 480 282 445 282" stroke="#505050" stroke-width="15"/>
<path d="M375 60C350 110 400 130 400 190C395 230 410 250 416 266" stroke="#4c4c4c" stroke-width="10"/>
<path d="M352 212L330 240L318 270" stroke="#2c2c2c" stroke-width="11"/>
<path d="M420 640C500 668 600 622 700 632C780 640 820 680 885 686" stroke="#2a2a2a" stroke-width="27"/>
<path d="M700 630C800 618 900 640 1045 628" stroke="#3c3c3c" stroke-width="9"/>
<path d="M885 686C950 680 1000 662 1045 656" stroke="#404040" stroke-width="6"/>
<path d="M860 682L900 684" stroke="#1c1c1c" stroke-width="14"/>
<path d="M335 592C305 560 272 580 258 588C236 570 250 532 276 520" stroke="#262626" stroke-width="11"/>
<path d="M800 520C790 560 780 600 770 625M800 580C840 590 880 600 930 625" stroke="#505050" stroke-width="4"/>
<path d="M410 330C430 360 400 380 405 400M440 300C480 320 500 330 490 345" stroke="#505050" stroke-width="3"/>
</g>
<rect x="30" y="25" width="1030" height="1035" fill="#000" opacity="0.12" filter="url(#blot)"/>
</g>
<path d="M1150.5 544.3 C1149.3 544.1 1145.7 543.3 1143.3 543.1 C1140.9 542.8 1138.4 542.5 1136.1 543.1 C1133.8 543.6 1131.5 544.9 1129.5 546.1 C1127.5 547.3 1125.7 548.4 1124.1 550.3 C1122.5 552.2 1121.3 554.9 1119.9 557.5 C1118.5 560.1 1116.6 563.3 1115.6 565.9 C1114.7 568.5 1114.3 570.7 1114.2 573.1 C1114.1 575.5 1114.6 578.5 1115.0 580.4 C1115.5 582.2 1116.3 582.0 1116.8 584.0 C1117.3 586.0 1117.5 589.4 1118.1 592.4 C1118.6 595.4 1119.1 598.8 1119.9 602.0 C1120.7 605.2 1121.6 608.2 1122.9 611.6 C1124.2 615.1 1125.9 619.7 1127.7 622.5 C1129.5 625.3 1131.6 626.6 1133.7 628.5 C1135.8 630.4 1139.2 633.0 1140.3 633.9 L1150.5 633.3 C1150.1 632.3 1149.8 629.2 1148.1 627.3 C1146.4 625.4 1142.5 623.4 1140.3 621.9 C1138.1 620.4 1136.7 620.4 1134.9 618.3 C1133.1 616.2 1130.9 612.3 1129.5 609.2 C1128.1 606.1 1127.5 602.8 1126.5 599.6 C1125.5 596.4 1124.7 592.6 1123.5 590.0 C1122.3 587.4 1119.8 585.5 1119.3 584.0 C1118.8 582.5 1120.1 582.4 1120.5 581.0 C1120.9 579.6 1121.0 577.1 1121.7 575.5 C1122.4 573.9 1123.9 572.9 1124.7 571.3 C1125.5 569.7 1125.7 567.8 1126.5 565.9 C1127.3 564.0 1128.1 562.0 1129.5 559.9 C1130.9 557.8 1132.8 554.9 1134.9 553.3 C1137.0 551.7 1139.5 551.0 1142.1 550.3 C1144.7 549.6 1149.1 549.3 1150.5 549.1Z" fill="#303030" filter="url(#b1a)" opacity="0.92"/>
<path d="M1150.5 544.3 C1149.3 544.1 1145.7 543.3 1143.3 543.1 C1140.9 542.8 1138.4 542.5 1136.1 543.1 C1133.8 543.6 1131.5 544.9 1129.5 546.1 C1127.5 547.3 1125.7 548.4 1124.1 550.3 C1122.5 552.2 1121.3 554.9 1119.9 557.5 C1118.5 560.1 1116.6 563.3 1115.6 565.9 C1114.7 568.5 1114.3 570.7 1114.2 573.1 C1114.1 575.5 1114.6 578.5 1115.0 580.4 C1115.5 582.2 1116.3 582.0 1116.8 584.0 C1117.3 586.0 1117.5 589.4 1118.1 592.4 C1118.6 595.4 1119.1 598.8 1119.9 602.0 C1120.7 605.2 1121.6 608.2 1122.9 611.6 C1124.2 615.1 1125.9 619.7 1127.7 622.5 C1129.5 625.3 1131.6 626.6 1133.7 628.5 C1135.8 630.4 1139.2 633.0 1140.3 633.9" fill="none" stroke="#ece400" stroke-width="1.1"/><path d="M1150.5 549.1 C1149.1 549.3 1144.7 549.6 1142.1 550.3 C1139.5 551.0 1137.0 551.7 1134.9 553.3 C1132.8 554.9 1130.9 557.8 1129.5 559.9 C1128.1 562.0 1127.3 564.0 1126.5 565.9 C1125.7 567.8 1125.5 569.7 1124.7 571.3 C1123.9 572.9 1122.4 573.9 1121.7 575.5 C1121.0 577.1 1120.9 579.6 1120.5 581.0 C1120.1 582.4 1118.8 582.5 1119.3 584.0 C1119.8 585.5 1122.3 587.4 1123.5 590.0 C1124.7 592.6 1125.5 596.4 1126.5 599.6 C1127.5 602.8 1128.1 606.1 1129.5 609.2 C1130.9 612.3 1133.1 616.2 1134.9 618.3 C1136.7 620.4 1138.6 620.9 1140.3 621.9 C1142.0 622.9 1144.3 623.9 1145.1 624.3" fill="none" stroke="#ece400" stroke-width="1.1"/>
<path d="M1115.4 566.2L1124.7 571.3M1127.7 622.2L1134.9 618.3" stroke="#f2ea00" stroke-width="1.500"/>
<path d="M1116.6 584.0L1119.5 584.1" stroke="#e8e8e8" stroke-width="1.500"/>
<rect x="1059" y="488" width="244" height="245" filter="url(#nz)" opacity="0.22"/>
<g fill="#f0e800" font-size="12.500" font-weight="bold"><text x="1150.300" y="553.300" style="font-family:'Liberation Sans',sans-serif">P</text><text x="1147.800" y="638.100" style="font-family:'Liberation Sans',sans-serif">D</text></g>
</g></svg>

  <table class="t r" style="left:357px;top:67px;width:350px">
    <colgroup><col style="width:232px"><col style="width:117px"></colgroup>
    <tr><td class="k" style="height:76px">Sop Instance UID</td><td class="uid">1.3.12.2.1107.5.4.<br>7.7667.30000017<br>03070746530620<br>0000006.4</td></tr>
    <tr><td class="k">Image frame</td><td>23/63</td></tr>
    <tr><td class="k">Rotation</td><td>RAO 30&deg;</td></tr>
    <tr><td class="k">Angulation</td><td>CAU 0.1&deg;</td></tr>
    <tr><td class="k">Series number</td><td>4</td></tr>
    <tr><td class="k">SID</td><td>1038 mm</td></tr>
    <tr><td class="k">SOD</td><td>751 mm</td></tr>
  </table>
  <table class="t r" style="left:357px;top:333px;width:350px">
    <colgroup><col style="width:232px"><col style="width:117px"></colgroup>
    <tr><td class="k" style="height:76px">Sop Instance UID</td><td class="uid">1.3.12.2.1107.5.4.<br>7.7667.30000017<br>03070746530620<br>0000002.4</td></tr>
    <tr><td class="k">Image frame</td><td>37/70</td></tr>
    <tr><td class="k">Rotation</td><td>LAO 44.9&deg;</td></tr>
    <tr><td class="k">Angulation</td><td>CAU 15.2&deg;</td></tr>
    <tr><td class="k">Series number</td><td>2</td></tr>
    <tr><td class="k">SID</td><td>1051 mm</td></tr>
    <tr><td class="k">SOD</td><td>773 mm</td></tr>
  </table>
</div>
</div>
</body>
</html>
